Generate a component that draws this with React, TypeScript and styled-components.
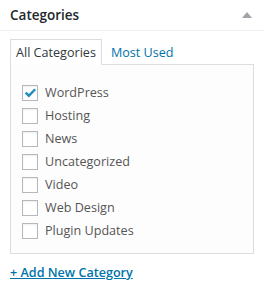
import styled, { createGlobalStyle } from "styled-components";

const GlobalStyle = createGlobalStyle`
  body {
    margin: 0;
    background: #fff;
    font-family: "Open Sans", "Liberation Sans", sans-serif;
  }
`;

const Box = styled.section`
  width: 264px;
  height: 300px;
  background: #fff;
`;

const Header = styled.div`
  height: 31px;
  box-sizing: border-box;
  display: flex;
  align-items: center;
  justify-content: space-between;
  padding: 0 10px;
  border-bottom: 1px solid #eee;
`;

const Title = styled.h2`
  margin: 0;
  font-size: 13.5px;
  font-weight: 600;
  color: #23282d;
`;

const Toggle = styled.span`
  width: 0;
  height: 0;
  margin-right: 2px;
  border-left: 5px solid transparent;
  border-right: 5px solid transparent;
  border-bottom: 6px solid #a0a5aa;
`;

const Inside = styled.div`
  padding: 8px 10px 0;
`;

const Tabs = styled.div`
  display: flex;
  align-items: flex-start;
  gap: 3px;
  margin-bottom: -1px;
  position: relative;
  z-index: 1;
`;

const Tab = styled.span<{ $active?: boolean }>`
  height: 26px;
  box-sizing: border-box;
  padding: 4px 5px 0;
  font-size: 12.6px;
  line-height: 18px;
  color: ${(p) => (p.$active ? "#32373c" : "#0073aa")};
  border: 1px solid ${(p) => (p.$active ? "#ddd" : "transparent")};
  border-bottom: none;
  background: ${(p) => (p.$active ? "#fff" : "transparent")};
`;

const Panel = styled.div`
  border: 1px solid #ddd;
  background: #fdfdfd;
  height: 190px;
  box-sizing: border-box;
  padding: 16px 11px 0;
`;

const Row = styled.label`
  height: 23px;
  display: flex;
  align-items: center;
  gap: 7px;
  font-size: 12.6px;
  color: #555;
`;

const Check = styled.span`
  width: 16px;
  height: 16px;
  box-sizing: border-box;
  border: 1px solid #b4b9be;
  background: #fff;
  box-shadow: inset 0 1px 2px rgba(0, 0, 0, 0.07);
  display: flex;
  align-items: center;
  justify-content: center;
`;

const AddLink = styled.a`
  display: inline-block;
  margin-top: 9px;
  font-size: 12.6px;
  font-weight: 600;
  color: #0073aa;
  text-decoration: underline;
  line-height: 19px;
`;

const categories = [
  { name: "WordPress", checked: true },
  { name: "Hosting" },
  { name: "News" },
  { name: "Uncategorized" },
  { name: "Video" },
  { name: "Web Design" },
  { name: "Plugin Updates" },
];

export default function App() {
  return (
    <Box>
      <GlobalStyle />
      <Header>
        <Title>Categories</Title>
        <Toggle />
      </Header>
      <Inside>
        <Tabs>
          <Tab $active>All Categories</Tab>
          <Tab>Most Used</Tab>
        </Tabs>
        <Panel>
          {categories.map((c) => (
            <Row key={c.name}>
              <Check>
                {c.checked && (
                  <svg width="14" height="14" viewBox="0 0 14 14">
                    <path
                      d="M1.8 7.4 L3.6 5.7 L5.9 8 L11.3 2.4 L13 4.1 L5.9 11.4 Z"
                      fill="#1e8cbe"
                    />
                  </svg>
                )}
              </Check>
              {c.name}
            </Row>
          ))}
        </Panel>
        <AddLink href="#">+ Add New Category</AddLink>
      </Inside>
    </Box>
  );
}
